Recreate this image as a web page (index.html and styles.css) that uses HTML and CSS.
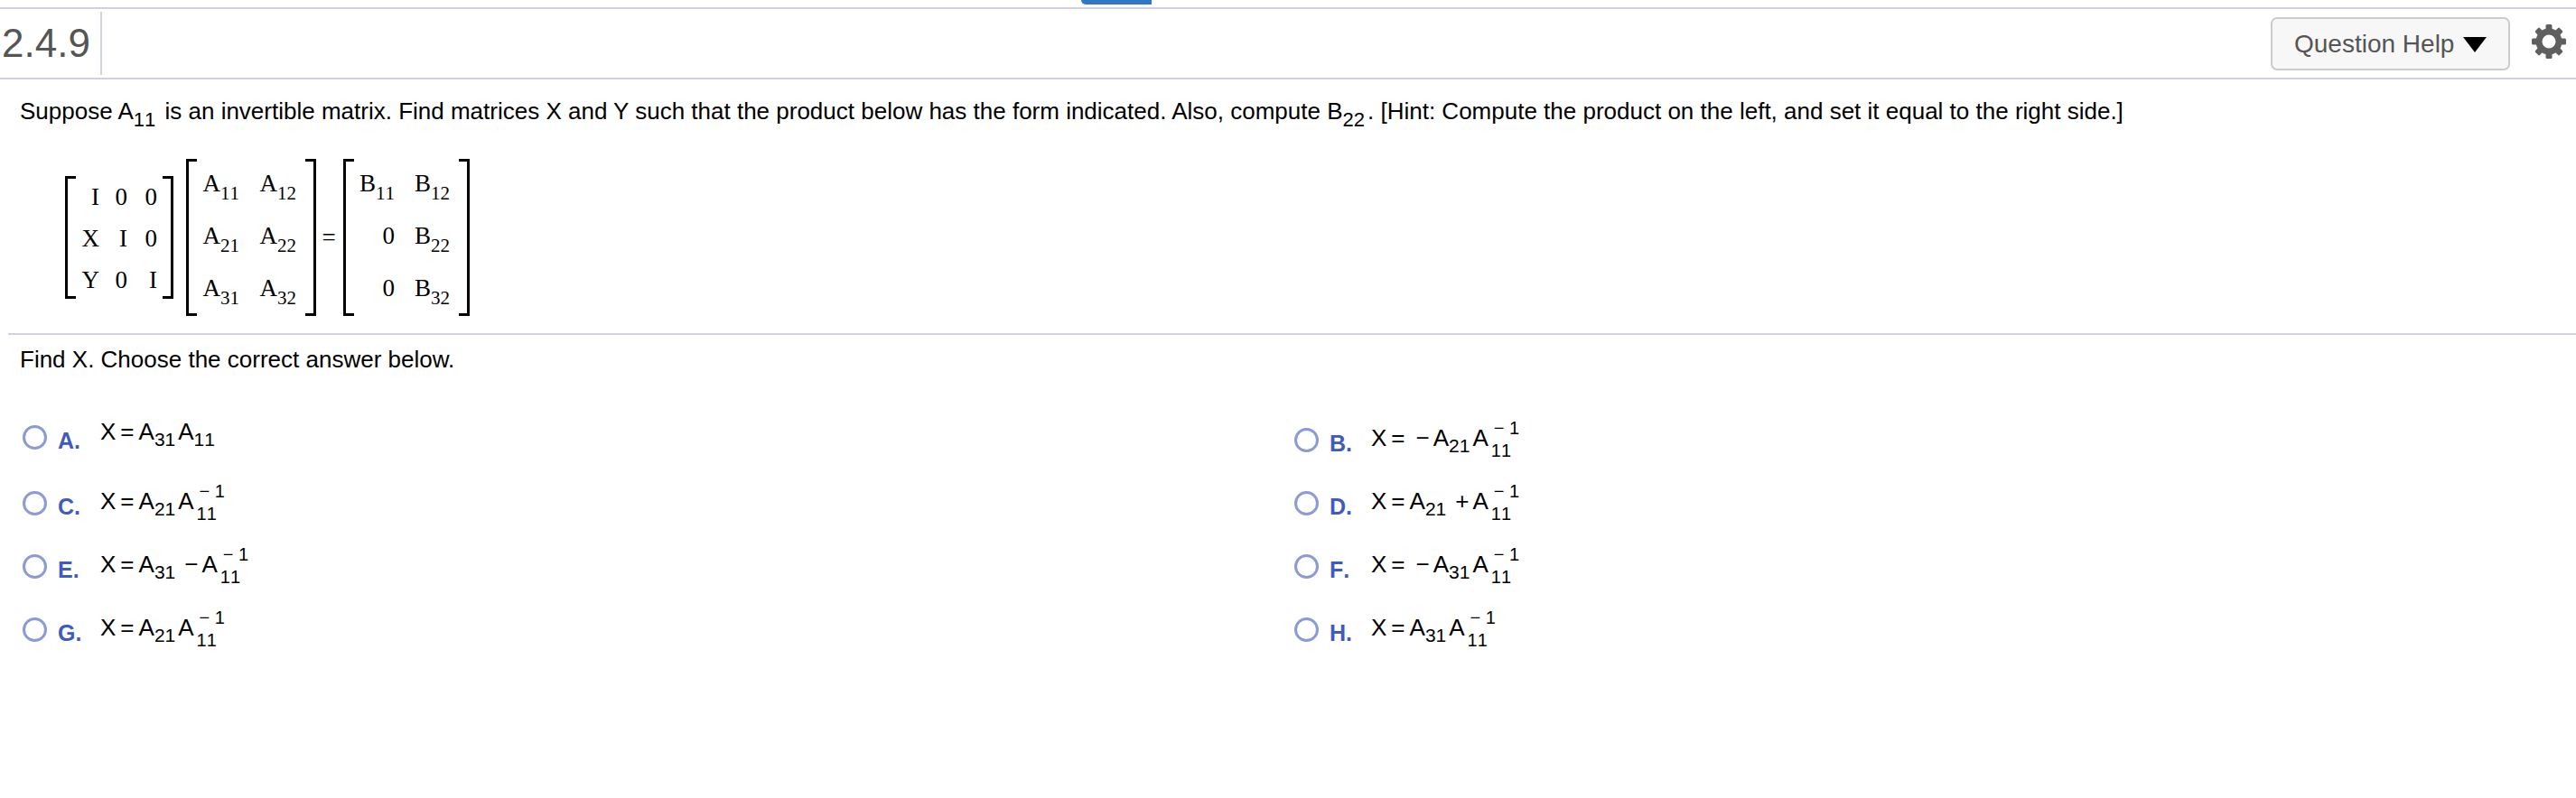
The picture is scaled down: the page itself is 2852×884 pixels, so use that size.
FILE: index.html
```html
<!DOCTYPE html>
<html lang="en">
<head>
    <meta charset="UTF-8">
    <title>2.4.9</title>
    <link rel="stylesheet" href="styles.css">
</head>
<body>
    <div class="top-strip"><span class="top-tab"></span></div>
    <div class="header">
        <div class="number">2.4.9</div>
        <button class="help-btn" type="button">Question Help <span class="caret"></span></button>
        <svg class="gear" viewBox="0 0 40 40" aria-hidden="true">
            <circle class="gear-ring" cx="20" cy="20" r="11"/>
            <g class="gear-teeth">
                <rect x="16.5" y="1" width="7" height="8" rx="1.5"/>
                <rect x="16.5" y="1" width="7" height="8" rx="1.5" transform="rotate(45 20 20)"/>
                <rect x="16.5" y="1" width="7" height="8" rx="1.5" transform="rotate(90 20 20)"/>
                <rect x="16.5" y="1" width="7" height="8" rx="1.5" transform="rotate(135 20 20)"/>
                <rect x="16.5" y="1" width="7" height="8" rx="1.5" transform="rotate(180 20 20)"/>
                <rect x="16.5" y="1" width="7" height="8" rx="1.5" transform="rotate(225 20 20)"/>
                <rect x="16.5" y="1" width="7" height="8" rx="1.5" transform="rotate(270 20 20)"/>
                <rect x="16.5" y="1" width="7" height="8" rx="1.5" transform="rotate(315 20 20)"/>
            </g>
        </svg>
    </div>

    <div class="question">
        <p class="statement">Suppose A<sub>11</sub> is an invertible matrix. Find matrices X and Y such that the product below has the form indicated. Also, compute B<sub>22</sub>. [Hint: Compute the product on the left, and set it equal to the right side.]</p>

        <div class="equation">
            <div class="matrix matrix-small">
                <span>I</span><span>0</span><span>0</span>
                <span>X</span><span>I</span><span>0</span>
                <span>Y</span><span>0</span><span>I</span>
            </div>
            <div class="matrix matrix-big">
                <span>A<sub>11</sub></span><span>A<sub>12</sub></span>
                <span>A<sub>21</sub></span><span>A<sub>22</sub></span>
                <span>A<sub>31</sub></span><span>A<sub>32</sub></span>
            </div>
            <span class="equals">=</span>
            <div class="matrix matrix-big matrix-right">
                <span>B<sub>11</sub></span><span>B<sub>12</sub></span>
                <span>0</span><span>B<sub>22</sub></span>
                <span>0</span><span>B<sub>32</sub></span>
            </div>
        </div>
    </div>

    <div class="answers">
        <p class="prompt">Find X. Choose the correct answer below.</p>
        <div class="options">
            <label class="option option-plain"><input type="radio" name="ans"><b>A.</b><span class="math">X<i>=</i>A<sub>31</sub>A<sub>11</sub></span></label>
            <label class="option option-right"><input type="radio" name="ans"><b>B.</b><span class="math">X<i>=</i><i class="minus">−</i>A<sub>21</sub>A<span class="stack"><span class="up">− 1</span><span>11</span></span></span></label>
            <label class="option"><input type="radio" name="ans"><b>C.</b><span class="math">X<i>=</i>A<sub>21</sub>A<span class="stack"><span class="up">− 1</span><span>11</span></span></span></label>
            <label class="option option-right"><input type="radio" name="ans"><b>D.</b><span class="math">X<i>=</i>A<sub>21</sub><i class="minus">+</i>A<span class="stack"><span class="up">− 1</span><span>11</span></span></span></label>
            <label class="option"><input type="radio" name="ans"><b>E.</b><span class="math">X<i>=</i>A<sub>31</sub><i class="minus">−</i>A<span class="stack"><span class="up">− 1</span><span>11</span></span></span></label>
            <label class="option option-right"><input type="radio" name="ans"><b>F.</b><span class="math">X<i>=</i><i class="minus">−</i>A<sub>31</sub>A<span class="stack"><span class="up">− 1</span><span>11</span></span></span></label>
            <label class="option"><input type="radio" name="ans"><b>G.</b><span class="math">X<i>=</i>A<sub>21</sub>A<span class="stack"><span class="up">− 1</span><span>11</span></span></span></label>
            <label class="option option-right"><input type="radio" name="ans"><b>H.</b><span class="math">X<i>=</i>A<sub>31</sub>A<span class="stack"><span class="up">− 1</span><span>11</span></span></span></label>
        </div>
    </div>
</body>
</html>
```

FILE: styles.css
```css
body {
    margin: 0;
    padding: 0;
    font-family: "Liberation Sans", Arial, sans-serif;
    font-size: 26px;
    background-color: #fff;
    color: #000;
}
.top-strip {
    display: flex;
    height: 8px;
    border-bottom: 2px solid #cfd2e0;
}
.top-tab {
    width: 78px;
    height: 5px;
    margin-left: 1197px;
    background-color: #3277c6;
    border-radius: 0 0 0 8px;
}
.header {
    display: flex;
    align-items: center;
    height: 76px;
    border-bottom: 2px solid #cfd2e0;
}
.number {
    width: 109px;
    height: 70px;
    padding-left: 2px;
    line-height: 70px;
    font-size: 44px;
    color: #555;
    border-right: 2px solid #cfd2e0;
}
.help-btn {
    display: flex;
    align-items: center;
    gap: 10px;
    width: 265px;
    height: 59px;
    margin-left: auto;
    padding: 2px 0 0 24px;
    font-family: inherit;
    font-size: 28px;
    color: #555;
    background-color: #f7f7f7;
    border: 2px solid #ccc;
    border-radius: 7px;
}
.caret {
    width: 0;
    height: 0;
    border-left: 13px solid transparent;
    border-right: 13px solid transparent;
    border-top: 17px solid #000;
}
.gear {
    width: 40px;
    height: 40px;
    margin: 0 10px 4px 23px;
}
.gear-ring {
    fill: none;
    stroke: #5f5f5f;
    stroke-width: 7;
}
.gear-teeth {
    fill: #5f5f5f;
}
.question {
    margin: 0 0 0 9px;
    padding: 0 0 0 13px;
    height: 281px;
    border-bottom: 2px solid #cfd2e0;
}
.statement {
    margin: 0;
    padding-top: 15px;
    line-height: 40px;
}
sub {
    font-size: 22px;
    font-kerning: none;
    line-height: 0;
    margin-right: 3px;
    vertical-align: -8px;
}
.equation {
    display: flex;
    align-items: center;
    height: 174px;
    margin: 33px 0 0 50px;
    font-family: "Liberation Serif", "Times New Roman", serif;
    font-size: 27px;
}
.matrix {
    display: grid;
    justify-items: end;
    align-items: center;
    position: relative;
    border-left: 3px solid #000;
    border-right: 3px solid #000;
}
.matrix::before,
.matrix::after {
    content: "";
    position: absolute;
    top: 0;
    bottom: 0;
    width: 9px;
    border-top: 3px solid #000;
    border-bottom: 3px solid #000;
}
.matrix::before {
    left: 0;
}
.matrix::after {
    right: 0;
}
.matrix-small {
    grid-template-columns: 35px 31px 33px;
    grid-auto-rows: 46px;
    width: 99px;
    height: 136px;
    margin-right: 14px;
    padding-right: 15px;
}
.matrix-big {
    grid-template-columns: 56px 63px;
    grid-auto-rows: 58px;
    width: 138px;
    height: 174px;
}
.matrix-big span {
    padding-bottom: 4px;
}
.matrix sub {
    font-size: 21px;
    margin-right: 0;
    vertical-align: -9px;
}
.equals {
    width: 28px;
    padding-right: 2px;
    text-align: center;
}
.matrix-right {
    grid-template-columns: 54px 61px;
    width: 134px;
}
.answers {
    margin-left: 22px;
}
.prompt {
    margin: 0;
    padding-top: 10px;
    line-height: 34px;
}
.options {
    display: grid;
    grid-template-columns: 1408px 1fr;
    grid-auto-rows: 70px;
    margin-top: 37px;
}
.option {
    display: flex;
    align-items: center;
    box-sizing: border-box;
}
.option input {
    appearance: none;
    flex: none;
    box-sizing: border-box;
    width: 27px;
    height: 27px;
    margin: 0 0 0 3px;
    background-color: #fff;
    border: 3px solid #8a9bd6;
    border-radius: 50%;
}
.option b {
    width: 47px;
    margin: 8px 0 0 12px;
    font-size: 25px;
    font-kerning: none;
    color: #3f5bbd;
}
.option-right b {
    width: 46px;
}
.math {
    white-space: nowrap;
    font-size: 26px;
    font-kerning: none;
}
.math sub {
    font-size: 21px;
    margin-right: 3px;
    vertical-align: -7px;
}
.math i {
    margin: 0 5px;
    font-style: normal;
}
.math .minus {
    margin: 0 4px 0 7px;
}
.stack {
    display: inline-flex;
    flex-direction: column;
    margin-left: 3px;
    line-height: 25px;
    font-size: 20px;
    vertical-align: 13px;
}
.up {
    margin-left: 3px;
}
.option-plain {
    padding-bottom: 6px;
}
.option-plain .math {
    margin-bottom: 12px;
}
```
